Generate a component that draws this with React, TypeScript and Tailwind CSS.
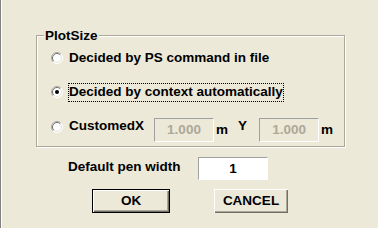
import React from "react";

function Radio({ checked = false }: { checked?: boolean }) {
  return (
    <svg width="12" height="12" viewBox="0 0 12 12" className="shrink-0">
      <circle cx="6" cy="6" r="5.5" fill="#ffffff" />
      <path d="M2.1 9.9 A5.5 5.5 0 0 1 9.9 2.1" fill="none" stroke="#a8a8a0" strokeWidth="1" />
      <path d="M9.9 2.1 A5.5 5.5 0 0 1 2.1 9.9" fill="none" stroke="#ffffff" strokeWidth="1" />
      <path d="M2.8 9.2 A4.5 4.5 0 0 1 9.2 2.8" fill="none" stroke="#707070" strokeWidth="1" />
      <path d="M9.2 2.8 A4.5 4.5 0 0 1 2.8 9.2" fill="none" stroke="#e4e2d6" strokeWidth="1" />
      {checked && <circle cx="6" cy="6" r="2" fill="#000000" />}
    </svg>
  );
}

function DisabledInput({ value }: { value: string }) {
  return (
    <div className="w-[60px] h-[24px] bg-[#ece9d8] border border-t-[#a0a0a0] border-l-[#a0a0a0] border-r-[#ffffff] border-b-[#ffffff] flex items-center justify-center text-[#aca899] leading-[16px] shrink-0">
      {value}
    </div>
  );
}

export default function App() {
  return (
    <div className="w-[378px] h-[228px] bg-[#ece9d8] border-l border-[#808080] shadow-[inset_1px_0_0_#ffffff] pt-[35px] overflow-hidden font-['Liberation_Sans',Arial,sans-serif] font-bold text-[13.5px] text-black">
      <div className="relative ml-[35px] w-[309px] h-[112px] border border-[#aca899] shadow-[1px_1px_0_#ffffff,inset_1px_1px_0_#ffffff] pl-[14px]">
        <span className="absolute left-[7px] -top-[8px] bg-[#ece9d8] px-[1px] leading-[16px]">PlotSize</span>

        <div className="flex items-start mt-[14px] h-[16px]">
          <div className="mt-[2px]">
            <Radio />
          </div>
          <span className="ml-[6px] leading-[16px] whitespace-nowrap">Decided by PS command in file</span>
        </div>

        <div className="flex items-start mt-[17px] h-[19px]">
          <div className="mt-[3px]">
            <Radio checked />
          </div>
          <span className="ml-[5px] border border-dotted border-black leading-[16px] h-[19px] whitespace-nowrap">
            Decided by context automatically
          </span>
        </div>

        <div className="flex items-start mt-[16px] h-[24px]">
          <div className="mt-[3px]">
            <Radio />
          </div>
          <span className="ml-[6px] leading-[16px] whitespace-nowrap">CustomedX</span>
          <div className="ml-[10px]">
            <DisabledInput value="1.000" />
          </div>
          <span className="ml-[2px] mt-[4px] leading-[16px]">m</span>
          <span className="ml-[10px] leading-[16px]">Y</span>
          <div className="ml-[12px]">
            <DisabledInput value="1.000" />
          </div>
          <span className="ml-[2px] mt-[4px] leading-[16px]">m</span>
        </div>
      </div>

      <div className="flex items-start mt-[10px] pl-[67px]">
        <span className="w-[130px] mt-[2px] leading-[16px] whitespace-nowrap">Default pen width</span>
        <div className="w-[70px] h-[23px] bg-white border border-t-[#a0a0a0] border-l-[#a0a0a0] border-r-[#ffffff] border-b-[#ffffff] flex items-center justify-center leading-[16px]">
          1
        </div>
      </div>

      <div className="flex items-start mt-[9px] pl-[91px]">
        <button className="w-[78px] h-[24px] border border-black bg-[#ece9d8] shadow-[inset_1px_1px_0_#ffffff,inset_-1px_-1px_0_#716f64,inset_-2px_-2px_0_#aca899] flex items-center justify-center leading-[16px] font-bold">
          OK
        </button>
        <button className="ml-[44px] w-[74px] h-[24px] bg-[#ece9d8] shadow-[inset_1px_1px_0_#ffffff,inset_-1px_-1px_0_#716f64,inset_-2px_-2px_0_#aca899] flex items-center justify-center leading-[16px] font-bold">
          CANCEL
        </button>
      </div>
    </div>
  );
}
